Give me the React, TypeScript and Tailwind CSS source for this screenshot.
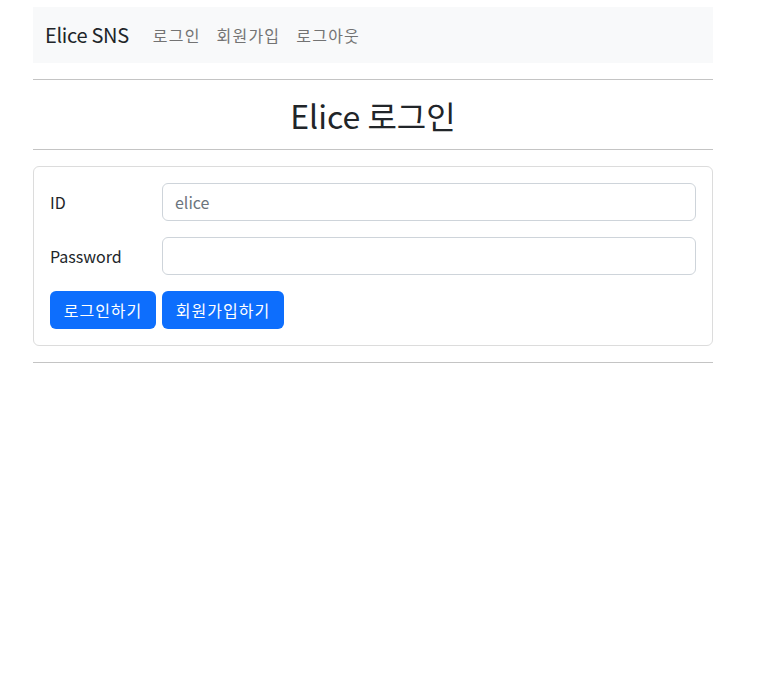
import React from "react";

export default function App() {
  const font = { fontFamily: '"Noto Sans CJK KR", "Noto Sans", sans-serif' };
  return (
    <div className="min-h-screen bg-white text-[#212529]" style={font}>
      <div className="ml-[33px] w-[680px] pt-[7px]">
        <nav className="flex h-[56px] items-center bg-[#f8f9fa] pl-[12px] pr-[13px]">
          <span className="mr-[16px] text-[20px] leading-[30px] tracking-[-0.3px] text-[#212529]">Elice SNS</span>
          <div className="flex">
            <a className="px-[8px] text-[16px] leading-[24px] tracking-[1.2px] text-[#737373]">로그인</a>
            <a className="px-[8px] text-[16px] leading-[24px] tracking-[1.2px] text-[#737373]">회원가입</a>
            <a className="px-[8px] text-[16px] leading-[24px] tracking-[1.2px] text-[#737373]">로그아웃</a>
          </div>
        </nav>
        <hr className="mt-[16px] border-t border-[#c4c4c4]" />
        <h1 className="flex h-[69px] items-center justify-center text-[32px] font-normal leading-[40px] text-[#212529]">
          Elice 로그인
        </h1>
        <hr className="border-t border-[#c4c4c4]" />
        <div className="mt-[16px] rounded-[6px] border border-[#dcdcdc] p-[16px]">
          <div className="flex items-center">
            <label className="w-[112px] text-[16px] leading-[24px]">ID</label>
            <input
              placeholder="elice"
              className="h-[38px] flex-1 rounded-[6px] border border-[#ced4da] px-[12px] text-[16px] outline-none placeholder:text-[#6c757d]"
            />
          </div>
          <div className="mt-[16px] flex items-center">
            <label className="w-[112px] text-[16px] leading-[24px]">Password</label>
            <input
              type="password"
              className="h-[38px] flex-1 rounded-[6px] border border-[#ced4da] px-[12px] text-[16px] outline-none"
            />
          </div>
          <div className="mt-[16px] flex gap-[6px]">
            <button className="h-[38px] w-[106px] rounded-[6px] bg-[#0d6efd] text-[16px] tracking-[1px] text-white">로그인하기</button>
            <button className="h-[38px] w-[122px] rounded-[6px] bg-[#0d6efd] text-[16px] tracking-[1px] text-white">회원가입하기</button>
          </div>
        </div>
        <hr className="mt-[16px] border-t border-[#c4c4c4]" />
      </div>
    </div>
  );
}
